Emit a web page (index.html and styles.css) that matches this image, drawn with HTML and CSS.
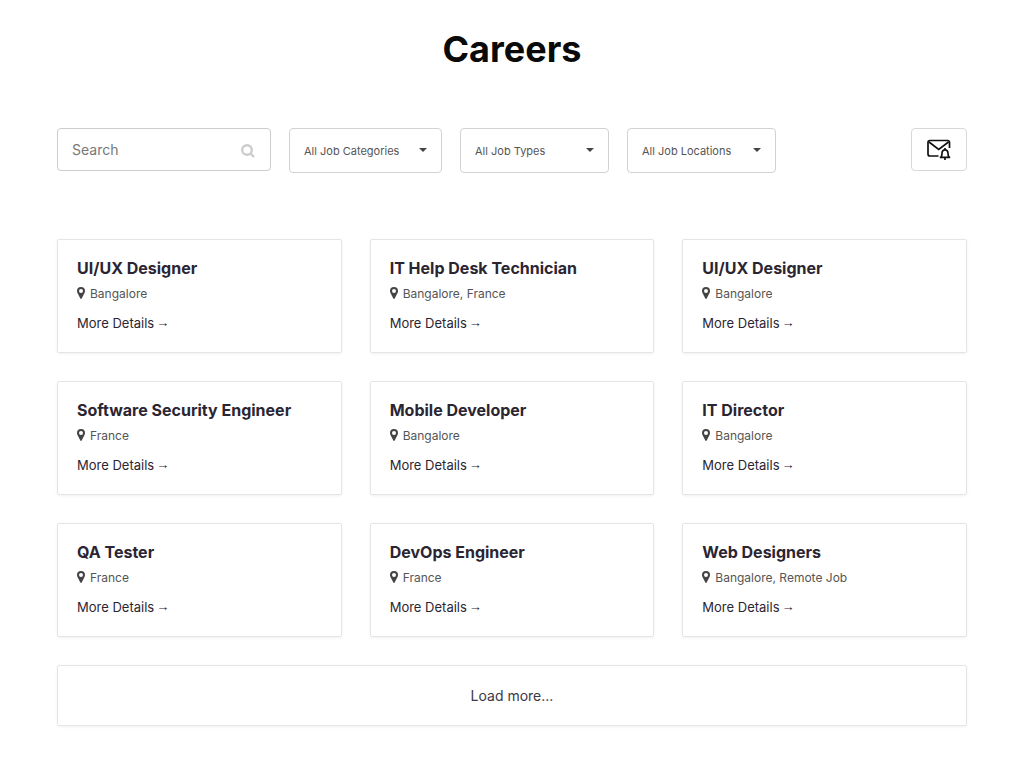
FILE: index.html
```html
<!DOCTYPE html>
<html lang="en">
<head>
  <meta charset="UTF-8" />
  <meta name="viewport" content="width=device-width, initial-scale=1.0"/>
  <title>Careers</title>
  <link rel="stylesheet" href="styles.css">
</head>
<body>
  <!-- map pin shared by all the cards -->
  <svg class="sprite" aria-hidden="true">
    <symbol id="pin" viewBox="0 0 8 12">
      <path fill-rule="evenodd" d="M4 0a4 4 0 0 1 4 4c0 .8-.2 1.4-.5 2L4.700 11.500a.8.8 0 0 1-1.400 0L.5 6C.2 5.400 0 4.800 0 4a4 4 0 0 1 4-4zm0 2a2 2 0 1 0 0 4 2 2 0 0 0 0-4z"/>
    </symbol>
  </svg>

  <main class="careers">
    <h1>Careers</h1>

    <form class="filters">
      <div class="search">
        <input type="text" id="search" placeholder="Search" aria-label="Search">
        <button type="button" class="search-btn" aria-label="Search jobs">
          <svg viewBox="0 0 14 14" width="14" height="14"><circle cx="6" cy="6" r="4.800"/><path d="M9.500 9.500l3.500 3.500"/></svg>
        </button>
      </div>
      <div class="filter filter-category">
        <select aria-label="Job category"><option>All Job Categories</option></select>
      </div>
      <div class="filter">
        <select aria-label="Job type"><option>All Job Types</option></select>
      </div>
      <div class="filter">
        <select aria-label="Job location"><option>All Job Locations</option></select>
      </div>
      <button type="button" class="alert-btn" aria-label="Job alerts">
        <svg viewBox="0 0 24 22" width="24" height="22">
          <path d="M11.500 17H3a2 2 0 0 1-2-2V3.500a2 2 0 0 1 2-2h17.500a2 2 0 0 1 2 2V9"/>
          <path d="M2 3l9.700 7.500L21.500 3"/>
          <path d="M12.800 18.300h10.400M14 18c.9-1 1-2 1-3.500 0-2.300 1.200-3.700 3-3.700s3 1.400 3 3.700c0 1.500.1 2.500 1 3.500M18 9v2M18 18v3"/>
        </svg>
      </button>
    </form>

    <div class="jobs">
      <article class="job">
        <h2>UI/UX Designer</h2>
        <p><svg class="pin"><use href="#pin"/></svg>Bangalore</p>
        <a href="#">More Details <span class="arrow">→</span></a>
      </article>
      <article class="job">
        <h2>IT Help Desk Technician</h2>
        <p><svg class="pin"><use href="#pin"/></svg>Bangalore, France</p>
        <a href="#">More Details <span class="arrow">→</span></a>
      </article>
      <article class="job">
        <h2>UI/UX Designer</h2>
        <p><svg class="pin"><use href="#pin"/></svg>Bangalore</p>
        <a href="#">More Details <span class="arrow">→</span></a>
      </article>
      <article class="job">
        <h2>Software Security Engineer</h2>
        <p><svg class="pin"><use href="#pin"/></svg>France</p>
        <a href="#">More Details <span class="arrow">→</span></a>
      </article>
      <article class="job">
        <h2>Mobile Developer</h2>
        <p><svg class="pin"><use href="#pin"/></svg>Bangalore</p>
        <a href="#">More Details <span class="arrow">→</span></a>
      </article>
      <article class="job">
        <h2>IT Director</h2>
        <p><svg class="pin"><use href="#pin"/></svg>Bangalore</p>
        <a href="#">More Details <span class="arrow">→</span></a>
      </article>
      <article class="job">
        <h2>QA Tester</h2>
        <p><svg class="pin"><use href="#pin"/></svg>France</p>
        <a href="#">More Details <span class="arrow">→</span></a>
      </article>
      <article class="job">
        <h2>DevOps Engineer</h2>
        <p><svg class="pin"><use href="#pin"/></svg>France</p>
        <a href="#">More Details <span class="arrow">→</span></a>
      </article>
      <article class="job">
        <h2>Web Designers</h2>
        <p><svg class="pin"><use href="#pin"/></svg>Bangalore, Remote Job</p>
        <a href="#">More Details <span class="arrow">→</span></a>
      </article>
    </div>

    <button type="button" class="load-more">Load more...</button>
  </main>
</body>
</html>
```

FILE: styles.css
```css
* {
  box-sizing: border-box;
}
body {
  margin: 0;
  background: #fff;
  color: #2b2532;
  font-family: Inter, "Liberation Sans", sans-serif;
}
input, select, button {
  font-family: inherit;
  background: #fff;
  border: 1px solid #ccc;
  border-radius: 4px;
}
button {
  cursor: pointer;
}
.sprite {
  position: absolute;
  width: 0;
  height: 0;
}
.careers {
  padding: 25px 57px 48px;
}
h1 {
  margin: 0 0 55px;
  color: #0a0a0a;
  font-size: 36px;
  line-height: 48px;
  text-align: center;
}

/* filter bar */
.filters {
  display: flex;
  align-items: flex-start;
  gap: 18px;
  margin-bottom: 66px;
}
.search {
  position: relative;
  width: 214px;
}
.search input {
  display: block;
  width: 100%;
  height: 43px;
  padding: 0 44px 0 14px;
  font-size: 14px;
}
.search input::placeholder {
  color: #777;
}
.search-btn {
  position: absolute;
  top: 8px;
  right: 8px;
  width: 30px;
  height: 30px;
  padding: 0;
  border: 0;
}
.search-btn svg {
  display: block;
  margin: auto;
  fill: none;
  stroke: #ccc;
  stroke-width: 2.4;
}
.filter {
  position: relative;
  width: 149px;
}
.filter-category {
  width: 153px;
}
.filter select {
  display: block;
  width: 100%;
  height: 45px;
  padding: 0 28px 0 14px;
  border-color: #d2d2d2;
  color: #555;
  font-size: 11px;
  appearance: none;
}
.filter::after {
  content: "";
  position: absolute;
  top: 20px;
  right: 15px;
  border: 4px solid transparent;
  border-top-color: #444;
  border-bottom: 0;
  pointer-events: none;
}
.alert-btn {
  width: 56px;
  height: 43px;
  margin-left: auto;
  padding: 0;
  border-color: #d8d8d8;
}
.alert-btn svg {
  display: block;
  margin: auto;
  fill: none;
  stroke: #111;
  stroke-width: 1.7;
}

/* job cards */
.jobs {
  display: grid;
  grid-template-columns: repeat(3, 1fr);
  gap: 28px;
}
.job {
  padding: 17px 19px 19px;
  border: 1px solid #e4e5e7;
  border-radius: 2px;
  box-shadow: 0 1px 3px rgba(0, 0, 0, 0.06);
}
.job h2 {
  margin: 0 0 5px;
  font-size: 16px;
  line-height: 22px;
}
.job p {
  display: flex;
  align-items: flex-start;
  gap: 5px;
  margin: 0 0 9px;
  color: #555;
  font-size: 12px;
  line-height: 20px;
}
.pin {
  width: 8px;
  height: 12px;
  margin-top: 3px;
  fill: #444;
}
.job a {
  display: flex;
  gap: 2px;
  color: #2b2532;
  font-size: 13px;
  line-height: 20px;
  text-decoration: none;
}
.arrow {
  font-family: "Liberation Sans", sans-serif;
}
.load-more {
  display: block;
  width: 100%;
  height: 61px;
  margin-top: 28px;
  color: #3c3844;
  border-color: #e4e5e7;
  border-radius: 2px;
  font-size: 14px;
  box-shadow: 0 1px 3px rgba(0, 0, 0, 0.06);
}
```
